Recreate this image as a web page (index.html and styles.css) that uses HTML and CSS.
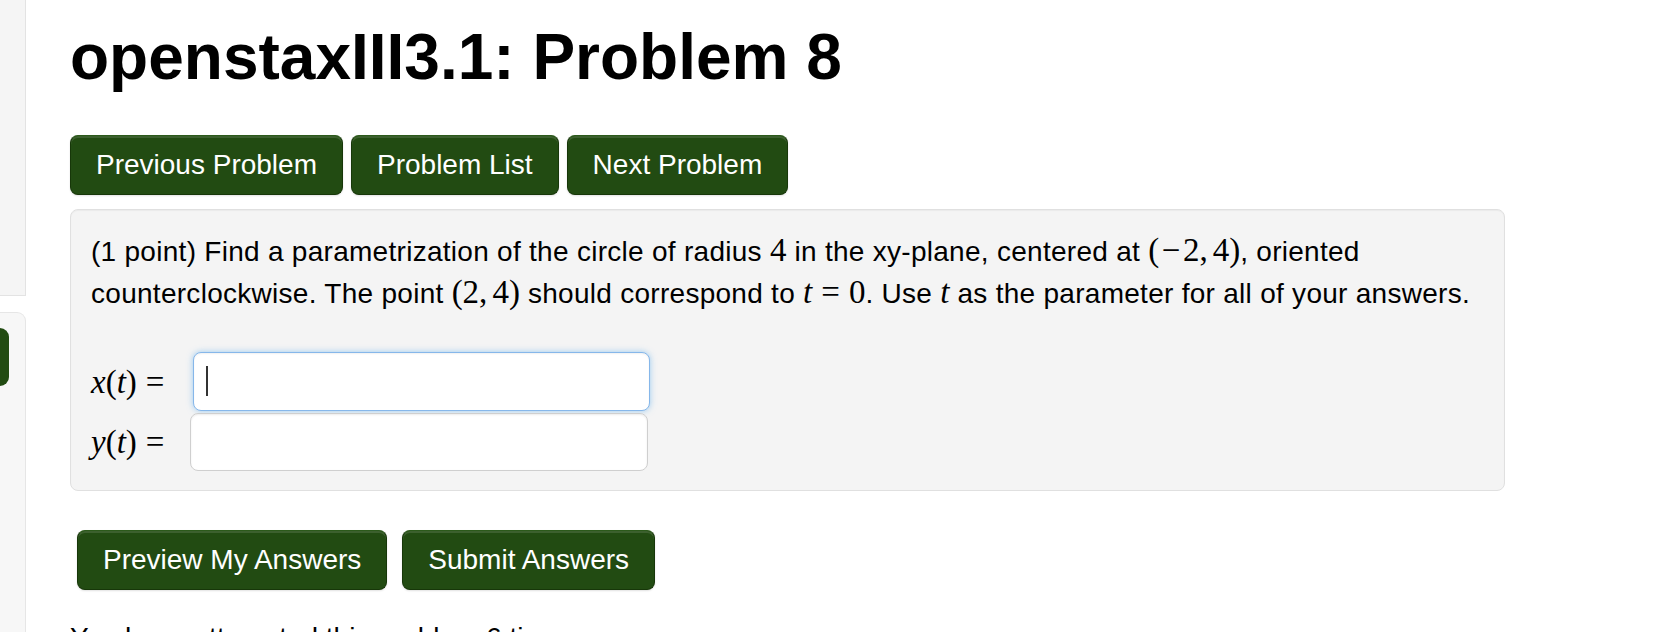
FILE: index.html
```html
<!DOCTYPE html>
<html lang="en">
<head>
<meta charset="utf-8">
<title>openstaxIII3.1: Problem 8</title>
<link rel="stylesheet" href="styles.css">
</head>
<body>
<div class="page">
  <aside class="sidebar">
    <div class="side-top"></div>
    <div class="side-panel"><div class="side-btn"></div></div>
  </aside>
  <main class="main">
    <h1 class="title">openstaxIII3.1: Problem 8</h1>
    <nav class="nav-row">
      <button class="btn">Previous Problem</button>
      <button class="btn">Problem List</button>
      <button class="btn">Next Problem</button>
    </nav>
    <section class="problem">
      <p class="statement">(1 point) Find a parametrization of the circle of radius <span class="m">4</span> in the xy-plane, centered at <span class="m">(<span class="minus">−</span>2,<span class="thin"></span>4)</span>, oriented<br>counterclockwise. The point <span class="m">(2,<span class="thin"></span>4)</span> should correspond to <span class="m"><i>t</i><span class="eq">=</span>0</span>. Use <span class="m"><i>t</i></span> as the parameter for all of your answers.</p>
      <div class="answers">
        <div class="ans-row">
          <span class="label label-x m"><i>x</i>(<i>t</i>)<span class="eq">=</span></span>
          <div class="field field-x">
            <input class="ans ans-focus" type="text" aria-label="x(t)">
            <span class="caret"></span>
          </div>
        </div>
        <div class="ans-row">
          <span class="label label-y m"><i>y</i>(<i>t</i>)<span class="eq">=</span></span>
          <div class="field field-y">
            <input class="ans" type="text" aria-label="y(t)">
          </div>
        </div>
      </div>
    </section>
    <div class="submit-row">
      <button class="btn">Preview My Answers</button>
      <button class="btn">Submit Answers</button>
    </div>
    <p class="attempts">You have attempted this problem 6 times.</p>
  </main>
</div>
</body>
</html>
```
FILE: styles.css
```css
html, body {
  margin: 0;
  padding: 0;
  background: #ffffff;
}
body {
  font-family: "Liberation Sans", Arial, Helvetica, sans-serif;
  font-size: 28px;
  line-height: 40px;
  color: #000000;
  overflow: hidden;
  height: 632px;
}
.page {
  display: flex;
  align-items: flex-start;
}
.sidebar {
  width: 26px;
  flex: 0 0 26px;
  display: flex;
  flex-direction: column;
}
.side-top {
  height: 296px;
  background: #f5f5f5;
  border-right: 1px solid #e3e3e3;
  border-bottom: 1px solid #e3e3e3;
  box-sizing: border-box;
}
.side-panel {
  margin-top: 16px;
  height: 400px;
  background: #f7f7f7;
  border: 1px solid #e6e6e6;
  border-left: none;
  border-top-right-radius: 9px;
  box-sizing: border-box;
  padding-top: 15px;
}
.side-btn {
  width: 9px;
  height: 58px;
  background: #224b12;
  border-radius: 0 9px 9px 0;
}
.main {
  margin-left: 44px;
  width: 1435px;
}
.title {
  margin: 23px 0 0 0;
  font-size: 64px;
  line-height: 69px;
  font-weight: bold;
  letter-spacing: 0;
}
.nav-row {
  margin-top: 43px;
  display: flex;
  gap: 8px;
}
.btn {
  font-family: "Liberation Sans", Arial, Helvetica, sans-serif;
  font-size: 28px;
  line-height: 40px;
  padding: 9px 25px;
  color: #ffffff;
  background: #224b12;
  border: 1px solid #173709;
  border-top-color: #2c5a1b;
  border-radius: 8px;
  box-shadow: inset 0 2px 0 rgba(255, 255, 255, 0.12), 0 1px 2px rgba(0, 0, 0, 0.12);
  cursor: pointer;
  white-space: nowrap;
}
.problem {
  margin-top: 14px;
  background: #f4f4f4;
  border: 1px solid #e0e0e0;
  border-radius: 8px;
  padding: 20px 20px 19px 20px;
  box-shadow: inset 0 1px 1px rgba(0, 0, 0, 0.04);
}
.statement {
  margin: 0;
  white-space: nowrap;
  letter-spacing: 0.28px;
}
.m {
  font-family: "Liberation Serif", "Times New Roman", serif;
  font-size: 33px;
  letter-spacing: 0;
}
.m i {
  font-style: italic;
}
.minus {
  display: inline-block;
  width: 0.72em;
  text-align: center;
}
.thin {
  display: inline-block;
  width: 5px;
}
.eq {
  display: inline-block;
  margin: 0 9px;
}
.answers {
  margin-top: 38px;
  display: flex;
  flex-direction: column;
  gap: 2px;
}
.ans-row {
  display: flex;
  align-items: center;
}
.label {
  white-space: nowrap;
}
.label-x {
  width: 102px;
}
.label-y {
  width: 99px;
}
.field {
  position: relative;
}
.ans {
  display: block;
  box-sizing: border-box;
  font-family: "Liberation Sans", Arial, sans-serif;
  font-size: 28px;
  background: #ffffff;
  border: 1px solid #cccccc;
  border-radius: 8px;
  outline: none;
  padding: 0 12px;
  box-shadow: inset 0 1px 2px rgba(0, 0, 0, 0.08);
}
.field-x .ans {
  width: 457px;
  height: 59px;
}
.field-y .ans {
  width: 458px;
  height: 58px;
  border-color: #cfcfcf;
}
.ans-focus {
  border-color: #86b7ea;
  box-shadow: 0 0 6px rgba(82, 168, 236, 0.55), inset 0 1px 2px rgba(0, 0, 0, 0.06);
}
.caret {
  position: absolute;
  left: 13px;
  top: 14px;
  width: 2px;
  height: 30px;
  background: #333333;
}
.submit-row {
  margin-top: 39px;
  padding-left: 7px;
  display: flex;
  gap: 15px;
}
.attempts {
  margin: 28px 0 0 0;
  white-space: nowrap;
}
```
